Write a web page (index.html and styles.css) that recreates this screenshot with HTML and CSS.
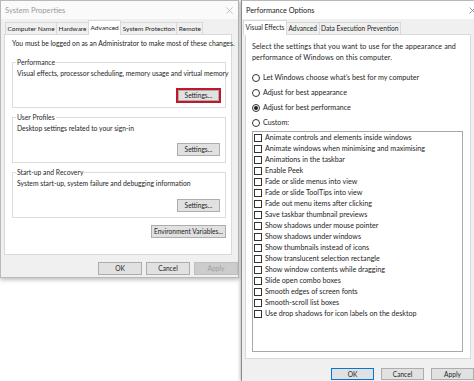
FILE: index.html
```html
<!DOCTYPE html>
<html>
<head>
<meta charset="utf-8">
<link rel="stylesheet" href="styles.css">
</head>
<body>
<div class="desk">
  <div class="win win-left">
    <div class="titlebar inactive">
      <span class="title">System Properties</span>
      <svg class="close" viewBox="0 0 8 8" width="7" height="7"><path d="M0.5 0.5 L7.5 7.5 M7.5 0.5 L0.5 7.5" stroke="currentColor" stroke-width="0.8" fill="none"/></svg>
    </div>
    <div class="win-body">
      <div class="tabs">
        <span class="tab">Computer Name</span>
        <span class="tab">Hardware</span>
        <span class="tab active">Advanced</span>
        <span class="tab">System Protection</span>
        <span class="tab">Remote</span>
      </div>
      <div class="panel">
        <p class="note">You must be logged on as an Administrator to make most of these changes.</p>
        <fieldset class="group g-perf">
          <legend>Performance</legend>
          <p class="desc">Visual effects, processor scheduling, memory usage and virtual memory</p>
          <div class="btn-row"><span class="red-focus"><button class="btn">Settings...</button></span></div>
        </fieldset>
        <fieldset class="group g-user">
          <legend>User Profiles</legend>
          <p class="desc">Desktop settings related to your sign-in</p>
          <div class="btn-row"><button class="btn">Settings...</button></div>
        </fieldset>
        <fieldset class="group g-start">
          <legend>Start-up and Recovery</legend>
          <p class="desc">System start-up, system failure and debugging information</p>
          <div class="btn-row"><button class="btn">Settings...</button></div>
        </fieldset>
        <div class="env-row"><button class="btn btn-env">Environment Variables...</button></div>
      </div>
      <div class="footer">
        <button class="btn btn-foot">OK</button>
        <button class="btn btn-foot">Cancel</button>
        <button class="btn btn-foot disabled">Apply</button>
      </div>
    </div>
  </div>

  <div class="win win-right">
    <div class="titlebar">
      <span class="title">Performance Options</span>
      <svg class="close" viewBox="0 0 8 8" width="7" height="7"><path d="M0.5 0.5 L7.5 7.5 M7.5 0.5 L0.5 7.5" stroke="currentColor" stroke-width="0.8" fill="none"/></svg>
    </div>
    <div class="win-body">
      <div class="tabs">
        <span class="tab active">Visual Effects</span>
        <span class="tab">Advanced</span>
        <span class="tab">Data Execution Prevention</span>
      </div>
      <div class="panel rpanel">
        <p class="intro">Select the settings that you want to use for the appearance and performance of Windows on this computer.</p>
        <div class="radios">
          <label class="radio"><span class="rdot"></span>Let Windows choose what’s best for my computer</label>
          <label class="radio"><span class="rdot"></span>Adjust for best appearance</label>
          <label class="radio"><span class="rdot on"></span>Adjust for best performance</label>
          <label class="radio"><span class="rdot"></span>Custom:</label>
        </div>
        <div class="listbox">
          <div class="item"><span class="cb"></span>Animate controls and elements inside windows</div>
          <div class="item"><span class="cb"></span>Animate windows when minimising and maximising</div>
          <div class="item"><span class="cb"></span>Animations in the taskbar</div>
          <div class="item"><span class="cb"></span>Enable Peek</div>
          <div class="item"><span class="cb"></span>Fade or slide menus into view</div>
          <div class="item"><span class="cb"></span>Fade or slide ToolTips into view</div>
          <div class="item"><span class="cb"></span>Fade out menu items after clicking</div>
          <div class="item"><span class="cb"></span>Save taskbar thumbnail previews</div>
          <div class="item"><span class="cb"></span>Show shadows under mouse pointer</div>
          <div class="item"><span class="cb"></span>Show shadows under windows</div>
          <div class="item"><span class="cb"></span>Show thumbnails instead of icons</div>
          <div class="item"><span class="cb"></span>Show translucent selection rectangle</div>
          <div class="item"><span class="cb"></span>Show window contents while dragging</div>
          <div class="item"><span class="cb"></span>Slide open combo boxes</div>
          <div class="item"><span class="cb"></span>Smooth edges of screen fonts</div>
          <div class="item"><span class="cb"></span>Smooth-scroll list boxes</div>
          <div class="item"><span class="cb"></span>Use drop shadows for icon labels on the desktop</div>
        </div>
      </div>
      <div class="footer rfooter">
        <button class="btn btn-foot default">OK</button>
        <button class="btn btn-foot">Cancel</button>
        <button class="btn btn-foot">Apply</button>
      </div>
    </div>
  </div>
</div>
</body>
</html>
```

FILE: styles.css
```css
* { box-sizing: border-box; }
html, body { margin: 0; padding: 0; }
body {
  width: 474px;
  height: 381px;
  overflow: hidden;
  background: #ffffff;
  font-family: Lato, "Noto Sans", sans-serif;
  color: #1e1e1e;
}
.desk {
  display: flex;
  align-items: flex-start;
  gap: 2px;
  width: 474px;
  height: 381px;
}
.win {
  flex: none;
  display: flex;
  flex-direction: column;
  background: #f0f0f0;
}
.win-left {
  width: 239px;
  height: 278px;
  border: 1px solid #b9b9b9;
  box-shadow: 0 2px 4px rgba(0,0,0,0.25);
}
.win-right {
  width: 240px;
  height: 381px;
  border-left: 1px solid #8a8a8a;
  border-top: 1px solid #b9b9b9;
  box-shadow: -1px 0 3px rgba(0,0,0,0.25);
}
.titlebar {
  height: 18px;
  flex: none;
  display: flex;
  align-items: center;
  justify-content: space-between;
  padding: 0 5px 0 4px;
  background: #ffffff;
  font-size: 7.3px;
  color: #222;
}
.titlebar.inactive { color: #9a9a9a; background: #fafafa; font-size: 7.6px; }
.titlebar .close { color: #777; }
.titlebar.inactive .close { color: #aaa; }
.win-right .titlebar { padding-right: 5px; }
.win-body {
  flex: 1;
  display: flex;
  flex-direction: column;
  padding: 1px 6px 0 3px;
}
.tabs {
  display: flex;
  align-items: flex-end;
  height: 14px;
  flex: none;
  padding-left: 1px;
  font-size: 6.5px;
  position: relative;
  z-index: 1;
}
.tab {
  height: 12px;
  line-height: 11px;
  padding: 0 1.5px;
  border: 1px solid #d9d9d9;
  border-bottom: none;
  margin-right: -1px;
  background: #f0f0f0;
  white-space: nowrap;
}
.tab.active {
  line-height: 13px;
  background: #ffffff;
  margin-bottom: -1px;
  height: 15px;
}
.panel {
  background: #ffffff;
  border: 1px solid #d9d9d9;
  padding: 3px 5px 0 7px;
  height: 221px;
  flex: none;
  font-size: 6.8px;
}
.note { margin: 0; line-height: 10px; height: 10px; white-space: nowrap; }
.group {
  margin: 9px 0 0 0;
  padding: 0 5px 0 4px;
  border: 1px solid #dcdcdc;
  min-width: 0;
}
.group legend {
  padding: 0 1px;
  margin-left: -1px;
  line-height: 10px;
  height: 10px;
  color: #2a2a2a;
}
.group .desc {
  margin: 1px 0 0 0;
  line-height: 10px;
  white-space: nowrap;
}
.g-user, .g-start { margin-top: 4px; }
.btn-row {
  display: flex;
  justify-content: flex-end;
  margin-top: 11px;
  padding-bottom: 4px;
}
.g-user .btn-row { margin-top: 10px; padding-bottom: 6px; }
.g-start .btn-row { margin-top: 11px; padding-bottom: 5px; }
.btn {
  font-family: inherit;
  font-size: 6.6px;
  color: #1e1e1e;
  width: 43px;
  height: 13px;
  padding: 0;
  background: #e1e1e1;
  border: 1px solid #adadad;
  line-height: 11px;
  border-radius: 0;
}
.red-focus {
  display: inline-flex;
  border: 2px solid #c2172b;
  margin: -1px -1px 0 0;
}
.red-focus .btn { width: 41px; height: 11px; line-height: 9px; }
.env-row {
  display: flex;
  justify-content: flex-end;
  margin-top: 7px;
}
.btn-env { width: 75px; }
.footer {
  display: flex;
  justify-content: flex-end;
  gap: 4px;
  padding-top: 7px;
  margin-right: -6px;
}
.btn-foot { width: 44px; height: 13px; line-height: 11px; }
.btn.disabled { background: #cccccc; color: #a0a0a0; border-color: #bfbfbf; }

/* right window */
.win-right .win-body { padding: 1px 0 0 0; }
.win-right .tabs { padding-left: 1px; font-size: 6.6px; }
.rpanel {
  margin: 0 3px 0 3px;
  width: 226px;
  height: 325px;
  padding: 6px 0 0 6px;
  font-size: 7.15px;
  color: #1e1e1e;
}
.intro {
  margin: 0;
  line-height: 11px;
  width: 214px;
  letter-spacing: 0.1px;
}
.radios {
  display: flex;
  flex-direction: column;
  margin-top: 7px;
}
.radio {
  display: flex;
  align-items: center;
  height: 15px;
  white-space: nowrap;
}
.rdot {
  width: 8px;
  height: 8px;
  border: 1px solid #333;
  border-radius: 50%;
  margin-right: 3px;
  display: inline-flex;
  align-items: center;
  justify-content: center;
  background: #fff;
}
.rdot.on::after {
  content: "";
  width: 4px;
  height: 4px;
  border-radius: 50%;
  background: #1e1e1e;
}
.listbox {
  margin-top: 1px;
  width: 211px;
  height: 221px;
  border: 1px solid #a8a8a8;
  padding: 0 0 0 1px;
}
.item {
  display: flex;
  align-items: center;
  height: 11px;
  white-space: nowrap;
}
.cb {
  width: 8px;
  height: 8px;
  border: 1px solid #333;
  background: #fff;
  margin-right: 3px;
  flex: none;
}
.rfooter { padding-top: 9px; padding-right: 7px; gap: 7px; margin-right: 0; }
.rfooter .btn-foot { width: 43px; height: 12px; line-height: 10px; }
.btn.default { border-color: #0078d7; }
```
